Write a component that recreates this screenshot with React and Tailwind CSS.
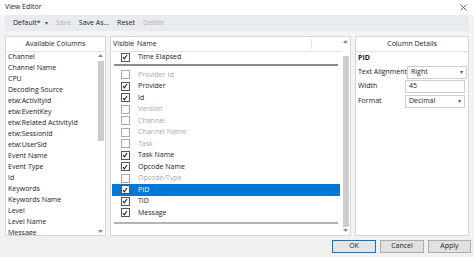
import React from 'react'

const available = [
  'Channel',
  'Channel Name',
  'CPU',
  'Decoding Source',
  'etw:ActivityId',
  'etw:EventKey',
  'etw:Related ActivityId',
  'etw:SessionId',
  'etw:UserSid',
  'Event Name',
  'Event Type',
  'Id',
  'Keywords',
  'Keywords Name',
  'Level',
  'Level Name',
  'Message',
]

const columns = [
  { name: 'Provider Id', on: false },
  { name: 'Provider', on: true },
  { name: 'Id', on: true },
  { name: 'Version', on: false },
  { name: 'Channel', on: false },
  { name: 'Channel Name', on: false },
  { name: 'Task', on: false },
  { name: 'Task Name', on: true },
  { name: 'Opcode Name', on: true },
  { name: 'Opcode/Type', on: false },
  { name: 'PID', on: true, selected: true },
  { name: 'TID', on: true },
  { name: 'Message', on: true },
]

function Check({ on }) {
  return (
    <span
      className={`flex h-[9px] w-[9px] items-center justify-center border bg-white ${
        on ? 'border-[#555]' : 'border-[#aaa]'
      }`}
    >
      {on && (
        <svg width="6" height="6" viewBox="0 0 6 6">
          <path d="M1 3.2 L2.4 4.8 L5 1" fill="none" stroke="#222" strokeWidth="1.1" />
        </svg>
      )}
    </span>
  )
}

function Arrow({ up }) {
  return (
    <svg width="5" height="3" viewBox="0 0 5 3">
      <path d={up ? 'M0 3 L2.5 0 L5 3 Z' : 'M0 0 L2.5 3 L5 0 Z'} fill="#8a8a8a" />
    </svg>
  )
}

function Row({ c }) {
  return (
    <div
      className={`flex h-[11.5px] items-center ${c.selected ? 'bg-[#0078d7] text-white' : ''}`}
    >
      <div className="flex w-[26px] justify-center">
        <Check on={c.on} />
      </div>
      <span className={c.selected ? 'text-white' : c.on ? 'text-[#222]' : 'text-[#a8a8a8]'}>
        {c.name}
      </span>
    </div>
  )
}

function Select({ value }) {
  return (
    <div className="flex h-[13px] w-[60px] shrink-0 items-center justify-between border border-[#cfcfcf] bg-white px-[3px]">
      <span>{value}</span>
      <span className="text-[6px] text-[#555]">▾</span>
    </div>
  )
}

export default function App() {
  return (
    <div className="flex h-[257px] w-[474px] flex-col overflow-hidden bg-[#f3f3f3] font-['Open_Sans',sans-serif] text-[7px] text-[#222]">
      <div className="flex h-[15px] items-center justify-between bg-white pl-[5px] pr-[7px]">
        <span>View Editor</span>
        <svg width="7" height="7" viewBox="0 0 7 7">
          <path d="M0.5 0.5 L6.5 6.5 M6.5 0.5 L0.5 6.5" stroke="#444" strokeWidth="0.8" />
        </svg>
      </div>

      <div className="mx-[5px] flex h-[16px] items-center gap-[8px] bg-[#e8ebf0] pl-[8px]">
        <span className="flex items-center gap-[4px]">
          Default* <span className="text-[6px] text-[#555]">▾</span>
        </span>
        <span className="text-[#b0b0b0]">Save</span>
        <span>Save As...</span>
        <span>Reset</span>
        <span className="text-[#b0b0b0]">Delete</span>
      </div>

      <div className="box-content flex h-[200px] gap-[4px] px-[5px] pt-[5px]">
        {/* available columns */}
        <div className="flex w-[101px] flex-col border border-[#d6d6d6] bg-white">
          <div className="flex h-[15px] shrink-0 items-center justify-center border-b border-[#e2e2e2]">
            Available Columns
          </div>
          <div className="flex min-h-0 flex-1">
            <div className="flex-1 overflow-hidden pl-[2px]">
              {available.map((a) => (
                <div key={a} className="flex h-[11px] items-center whitespace-nowrap">
                  {a}
                </div>
              ))}
            </div>
            <div className="flex w-[9px] flex-col items-center bg-white py-[2px]">
              <Arrow up />
              <div className="mt-[4px] h-[80px] w-[6px] bg-[#cdcdcd]" />
              <div className="flex-1" />
              <Arrow />
            </div>
          </div>
        </div>

        {/* visible columns */}
        <div className="flex w-[241px] border border-[#d6d6d6] bg-white">
          <div className="flex flex-1 flex-col">
            <div className="flex h-[14.5px] items-center border-b border-[#e2e2e2]">
              <span className="w-[23px] border-r border-[#e2e2e2] pl-[2px]">Visible</span>
              <span className="flex-1 border-r border-[#e2e2e2] pl-[3px]">Name</span>
              <span className="w-[29px]" />
            </div>
            <div className="px-[1px]">
              <Row c={{ name: 'Time Elapsed', on: true }} />
              <div className="mx-[2px] mb-[3px] mt-[1px] h-[2px] bg-[#8c8c8c]" />
              {columns.map((c) => (
                <Row key={c.name} c={c} />
              ))}
              <div className="mx-[2px] mt-[3px] h-[2px] bg-[#b4b4b4]" />
            </div>
          </div>
          <div className="flex w-[9px] flex-col items-center py-[3px]">
            <Arrow up />
            <div className="mt-[13px] w-[6px] flex-1 bg-[#cdcdcd]" />
            <div className="mt-[2px]">
              <Arrow />
            </div>
          </div>
        </div>

        {/* column details */}
        <div className="flex min-w-0 flex-1 flex-col border border-[#d6d6d6] bg-white">
          <div className="flex h-[15px] shrink-0 items-center justify-center border-b border-[#e2e2e2]">
            Column Details
          </div>
          <div className="flex flex-col gap-[1.5px] pl-[2px] pr-[3px]">
            <div className="h-[12px] font-bold leading-[12px]">PID</div>
            <div className="flex items-center justify-between whitespace-nowrap">
              <span>Text Alignment</span>
              <Select value="Right" />
            </div>
            <div className="flex items-center justify-between whitespace-nowrap">
              <span>Width</span>
              <div className="flex h-[13px] w-[60px] shrink-0 items-center border border-[#cfcfcf] bg-white px-[3px]">
                45
              </div>
            </div>
            <div className="flex items-center justify-between whitespace-nowrap">
              <span>Format</span>
              <Select value="Decimal" />
            </div>
          </div>
        </div>
      </div>

      <div className="flex flex-1 items-center justify-end gap-[4px] bg-[#f0f0f0] pr-[3px]">
        <button className="h-[13px] w-[44px] border border-[#0078d7] bg-[#e5e5e5] text-[7px]">OK</button>
        <button className="h-[13px] w-[44px] border border-[#adadad] bg-[#e1e1e1] text-[7px]">Cancel</button>
        <button className="h-[13px] w-[43px] border border-[#adadad] bg-[#e1e1e1] text-[7px]">Apply</button>
      </div>
    </div>
  )
}
